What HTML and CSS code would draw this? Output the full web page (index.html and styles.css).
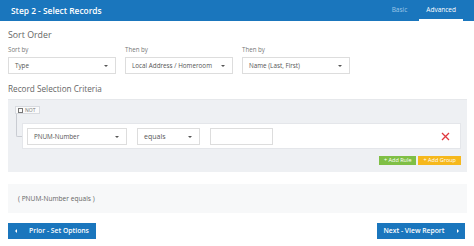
FILE: index.html
```html
<!DOCTYPE html>
<html>
<head>
  <title>Step 2 - Select Records</title>
  <link rel="stylesheet" href="styles.css">
</head>
<body>
  <div class="header">
    <div class="title">Step 2 - Select Records</div>
    <div class="tabs">
      <span class="tab">Basic</span>
      <span class="tab active">Advanced</span>
    </div>
  </div>

  <div class="content">
    <div class="section-title">Sort Order</div>
    <div class="sort-row">
      <div class="sort-col">
        <label>Sort by</label>
        <div class="select wide">Type<span class="caret"></span></div>
      </div>
      <div class="sort-col">
        <label>Then by</label>
        <div class="select wide">Local Address / Homeroom<span class="caret"></span></div>
      </div>
      <div class="sort-col">
        <label>Then by</label>
        <div class="select wide">Name (Last, First)<span class="caret"></span></div>
      </div>
    </div>

    <div class="section-title criteria">Record Selection Criteria</div>
    <div class="builder">
      <div class="not-btn"><span class="box"></span>NOT</div>
      <div class="rule-wrap">
        <div class="connector"></div>
        <div class="rule">
          <div class="select field">PNUM-Number<span class="caret"></span></div>
          <div class="select op">equals<span class="caret"></span></div>
          <div class="value"></div>
          <div class="spacer"></div>
          <svg class="remove" width="9" height="9" viewBox="0 0 9 9">
            <path d="M1 1 L8 8 M8 1 L1 8" stroke="#e0383e" stroke-width="1.3" fill="none"/>
          </svg>
        </div>
      </div>
      <div class="actions">
        <span class="btn-small green">+ Add Rule</span>
        <span class="btn-small orange">+ Add Group</span>
      </div>
    </div>

    <div class="summary">( PNUM-Number equals )</div>

    <div class="nav">
      <div class="nav-btn"><span class="tri left"></span>Prior - Set Options</div>
      <div class="nav-btn">Next - View Report<span class="tri right"></span></div>
    </div>
  </div>
</body>
</html>
```

FILE: styles.css
```css
body {
  margin: 0;
  font-family: "Open Sans", "Liberation Sans", sans-serif;
  color: #555;
  background: #fff;
}
.header {
  height: 21px;
  background-color: #1a76bd;
  display: flex;
  align-items: stretch;
  justify-content: space-between;
  color: white;
}
.title {
  padding-left: 11px;
  font-size: 8.4px;
  font-weight: 600;
  line-height: 21px;
}
.tabs {
  display: flex;
  padding-right: 11px;
}
.tab {
  font-size: 6.5px;
  line-height: 19px;
  padding: 0 7px;
  margin-left: 5px;
  color: #9cc6e8;
  border-bottom: 2px solid transparent;
}
.tab.active {
  color: white;
  border-bottom-color: white;
}
.content {
  padding: 0 7px 0 8px;
}
.section-title {
  font-size: 8.8px;
  margin-top: 8px;
  line-height: 12px;
  color: #666;
}
.sort-row {
  display: flex;
  gap: 9px;
  margin-top: 5px;
}
.sort-col label {
  display: block;
  font-size: 6.2px;
  line-height: 8px;
  color: #777;
  margin-bottom: 3px;
}
.select {
  box-sizing: border-box;
  height: 17px;
  border: 1px solid #ddd;
  background: #fff;
  font-size: 6.3px;
  line-height: 15px;
  padding-left: 6px;
  color: #555;
  position: relative;
}
.select.wide {
  width: 108px;
}
.caret {
  position: absolute;
  right: 7px;
  top: 7px;
  border-left: 2px solid transparent;
  border-right: 2px solid transparent;
  border-top: 2px solid #555;
}
.criteria {
  margin-top: 9px;
  font-size: 8.2px;
  padding-bottom: 4px;
  border-bottom: 1px solid #e6e8eb;
}
.builder {
  background: #eef0f3;
  padding: 6px 6px 7px 7px;
}
.not-btn {
  display: flex;
  width: fit-content;
  align-items: center;
  box-sizing: border-box;
  height: 8px;
  padding: 0 4px 0 2px;
  border: 1px solid #d8dbe0;
  background: #fafafa;
  font-size: 5px;
  line-height: 6px;
  color: #777;
}
.box {
  width: 3px;
  height: 3px;
  border: 1px solid #777;
  margin-right: 2px;
}
.rule-wrap {
  display: flex;
}
.connector {
  width: 6px;
  height: 23px;
  margin-left: 1px;
  border-left: 1px solid #c9ccd2;
  border-bottom: 1px solid #c9ccd2;
  border-bottom-left-radius: 2px;
  box-sizing: border-box;
}
.rule {
  flex: 1;
  margin-top: 9px;
  height: 26px;
  box-sizing: border-box;
  background: #fff;
  border: 1px solid #e4e6ea;
  display: flex;
  align-items: center;
  padding: 0 10px 0 4px;
}
.select.field {
  width: 100px;
  font-size: 6.3px;
}
.select.op {
  width: 63px;
  margin-left: 10px;
  font-size: 7px;
}
.value {
  width: 63px;
  height: 17px;
  box-sizing: border-box;
  margin-left: 10px;
  border: 1px solid #ddd;
}
.spacer {
  flex: 1;
}
.remove {
  margin-top: 1px;
}
.actions {
  display: flex;
  justify-content: flex-end;
  gap: 2px;
  margin-top: 7px;
}
.btn-small {
  font-size: 5.5px;
  line-height: 9px;
  padding: 0 5px;
  color: white;
}
.green {
  background: #7fbf45;
}
.orange {
  background: #f6b81c;
}
.summary {
  margin-top: 12px;
  background: #f7f8f9;
  height: 29px;
  line-height: 29px;
  padding-left: 10px;
  font-size: 6.6px;
  color: #666;
}
.nav {
  display: flex;
  justify-content: space-between;
  margin-top: 10px;
  padding-right: 2px;
}
.nav-btn {
  background: #1a76bd;
  color: white;
  font-size: 6.8px;
  font-weight: 600;
  height: 16px;
  line-height: 16px;
  width: 88px;
  box-sizing: border-box;
  display: flex;
  align-items: center;
  justify-content: center;
  gap: 12px;
}
.tri {
  border-top: 2px solid transparent;
  border-bottom: 2px solid transparent;
}
.tri.left {
  border-right: 2px solid white;
}
.tri.right {
  border-left: 2px solid white;
}
```
